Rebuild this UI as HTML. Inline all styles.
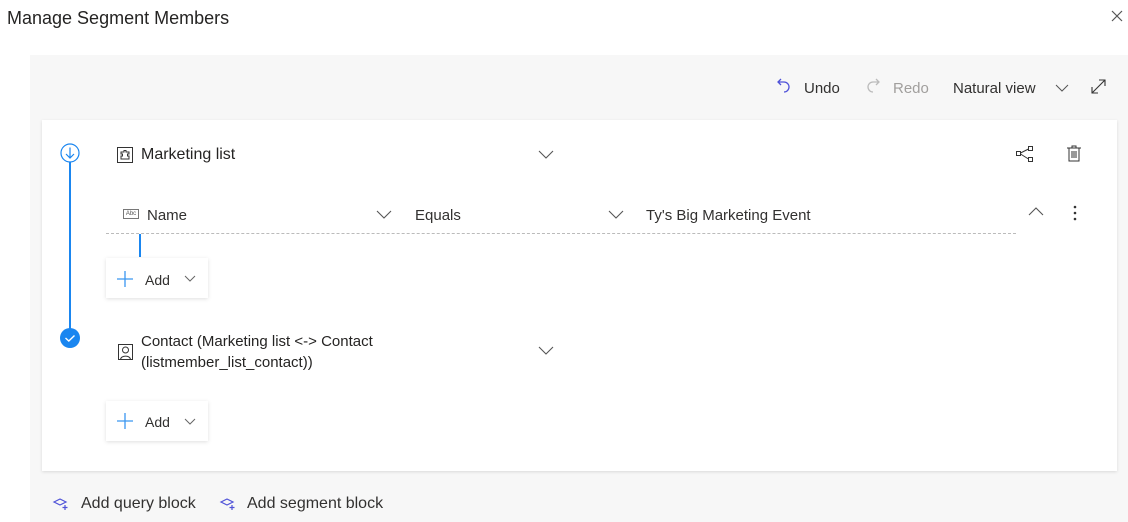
<!DOCTYPE html>
<html><head><meta charset="utf-8"><style>
*{margin:0;padding:0;box-sizing:border-box}
body{width:1128px;height:522px;background:#fff;font-family:"Segoe UI","Liberation Sans",sans-serif;color:#323130;position:relative;overflow:hidden}
.a{position:absolute}
.t{font-size:15px;white-space:nowrap}
svg{position:absolute;overflow:visible}
.addbtn{position:absolute;width:102px;height:40px;background:#fff;box-shadow:0 1px 4px rgba(0,0,0,.13)}
</style></head><body>
<div class="a" style="left:7px;top:8px;font-size:18px;color:#252423">Manage Segment Members</div>
<svg style="left:1111px;top:10px" width="12" height="12"><path d="M1 1L11 11M11 1L1 11" stroke="#555" stroke-width="1.2"/></svg>
<div class="a" style="left:30px;top:55px;width:1098px;height:467px;background:#f7f7f7"></div>

<svg style="left:777px;top:78px" width="14" height="16"><path d="M4 1L1 4L4 7M1 4H7A5 5 0 0 1 7 14" fill="none" stroke="#4f52d8" stroke-width="1.3"/></svg>
<div class="a t" style="left:804px;top:80px;color:#323130">Undo</div>
<svg style="left:866px;top:78px" width="14" height="16"><path d="M10 1L13 4L10 7M13 4H7A5 5 0 0 0 7 14" fill="none" stroke="#bbb" stroke-width="1.3"/></svg>
<div class="a t" style="left:893px;top:80px;color:#a19f9d">Redo</div>
<div class="a t" style="left:953px;top:80px">Natural view</div>
<svg style="left:1055px;top:84px" width="14" height="8"><path d="M1 1L7 7L13 1" fill="none" stroke="#555" stroke-width="1"/></svg>
<svg style="left:1091px;top:79px" width="15" height="15"><path d="M1 14L14 1M8 1H14V7M1 8V14H7" fill="none" stroke="#333" stroke-width="1.1"/></svg>

<div class="a" style="left:42px;top:120px;width:1075px;height:351px;background:#fff;box-shadow:0 1px 3px rgba(0,0,0,.12)"></div>

<div class="a" style="left:69px;top:162px;width:2px;height:170px;background:#1a86f0"></div>
<svg style="left:60px;top:143px" width="20" height="20"><circle cx="10" cy="10" r="9" fill="#fff" stroke="#1a86f0" stroke-width="1.2"/><path d="M10 4.5V15M6 11L10 15L14 11" fill="none" stroke="#1a86f0" stroke-width="1.2"/></svg>
<svg style="left:60px;top:328px" width="20" height="20"><circle cx="10" cy="10" r="10" fill="#1a86f0"/><path d="M5.5 10L8.8 13L14.5 7.5" fill="none" stroke="#fff" stroke-width="1.4"/></svg>

<svg style="left:117px;top:147px" width="16" height="16"><rect x="0.5" y="0.5" width="15" height="15" fill="none" stroke="#333"/><path d="M4 5H7V3.5H9V5H12V7H10.5V9H12V12H4V9H5.5V7H4Z" fill="none" stroke="#333" stroke-width="1"/></svg>
<div class="a" style="left:141px;top:146px;font-size:16px;color:#252423">Marketing list</div>
<svg style="left:538px;top:150px" width="16" height="9"><path d="M1 1L8 8L15 1" fill="none" stroke="#555" stroke-width="1.1"/></svg>
<svg style="left:1016px;top:146px" width="18" height="16"><rect x="0.5" y="5.5" width="4" height="4" fill="none" stroke="#333"/><rect x="12.5" y="0.5" width="4" height="4" fill="none" stroke="#333"/><rect x="12.5" y="11.5" width="4" height="4" fill="none" stroke="#333"/><path d="M4.5 7L12.5 3M4.5 8L12.5 13" stroke="#333" stroke-width="1"/></svg>
<svg style="left:1067px;top:145px" width="14" height="17"><path d="M0 3H14M5 3V1H9V3M2 3V16H12V3M5 6V13M7 6V13M9 6V13" fill="none" stroke="#333" stroke-width="1"/></svg>

<div class="a" style="left:123px;top:209px;width:16px;height:10px;border:1px solid #777;font-size:6px;line-height:8px;text-align:center;color:#555">Abc</div>
<div class="a t" style="left:147px;top:207px">Name</div>
<svg style="left:376px;top:210px" width="16" height="9"><path d="M1 1L8 8L15 1" fill="none" stroke="#555" stroke-width="1.1"/></svg>
<div class="a t" style="left:415px;top:207px">Equals</div>
<svg style="left:608px;top:210px" width="16" height="9"><path d="M1 1L8 8L15 1" fill="none" stroke="#555" stroke-width="1.1"/></svg>
<div class="a t" style="left:646px;top:207px">Ty's Big Marketing Event</div>
<svg style="left:1028px;top:207px" width="16" height="9"><path d="M1 8L8 1L15 8" fill="none" stroke="#555" stroke-width="1.1"/></svg>
<svg style="left:1073px;top:205px" width="4" height="16"><circle cx="2" cy="2" r="1.3" fill="#333"/><circle cx="2" cy="8" r="1.3" fill="#333"/><circle cx="2" cy="14" r="1.3" fill="#333"/></svg>
<div class="a" style="left:106px;top:233px;width:910px;border-top:1px dashed #bbb"></div>
<div class="a" style="left:139px;top:234px;width:2px;height:23px;background:#1a86f0"></div>

<div class="addbtn" style="left:106px;top:258px"></div>
<svg style="left:117px;top:271px" width="16" height="16"><path d="M8 0V16M0 8H16" stroke="#3a96f0" stroke-width="1.3"/></svg>
<div class="a" style="left:145px;top:272px;font-size:14px">Add</div>
<svg style="left:184px;top:275px" width="12" height="7"><path d="M1 1L6 6L11 1" fill="none" stroke="#666" stroke-width="1"/></svg>

<svg style="left:118px;top:344px" width="15" height="16"><rect x="0.5" y="0.5" width="14" height="15" fill="none" stroke="#333"/><circle cx="7.5" cy="6" r="3" fill="none" stroke="#333"/><path d="M2.5 15.5C3 11 12 11 12.5 15.5" fill="none" stroke="#333"/></svg>
<div class="a" style="left:141px;top:331px;font-size:15px;line-height:21px;color:#252423">Contact (Marketing list &lt;-&gt; Contact<br>(listmember_list_contact))</div>
<svg style="left:538px;top:346px" width="16" height="9"><path d="M1 1L8 8L15 1" fill="none" stroke="#555" stroke-width="1.1"/></svg>

<div class="addbtn" style="left:106px;top:401px"></div>
<svg style="left:117px;top:413px" width="16" height="16"><path d="M8 0V16M0 8H16" stroke="#3a96f0" stroke-width="1.3"/></svg>
<div class="a" style="left:145px;top:414px;font-size:14px">Add</div>
<svg style="left:184px;top:418px" width="12" height="7"><path d="M1 1L6 6L11 1" fill="none" stroke="#666" stroke-width="1"/></svg>

<svg style="left:53px;top:497px" width="16" height="14"><path d="M1 5L7 2L13 5L7 8Z" fill="none" stroke="#4f52d8" stroke-width="1.2"/><path d="M12 8V13M9.5 10.5H14.5" stroke="#4f52d8" stroke-width="1.2"/></svg>
<div class="a t" style="left:81px;top:495px;font-size:16px">Add query block</div>
<svg style="left:220px;top:497px" width="16" height="14"><path d="M1 5L7 2L13 5L7 8Z" fill="none" stroke="#4f52d8" stroke-width="1.2"/><path d="M12 8V13M9.5 10.5H14.5" stroke="#4f52d8" stroke-width="1.2"/></svg>
<div class="a t" style="left:247px;top:495px;font-size:16px">Add segment block</div>
</body></html>
